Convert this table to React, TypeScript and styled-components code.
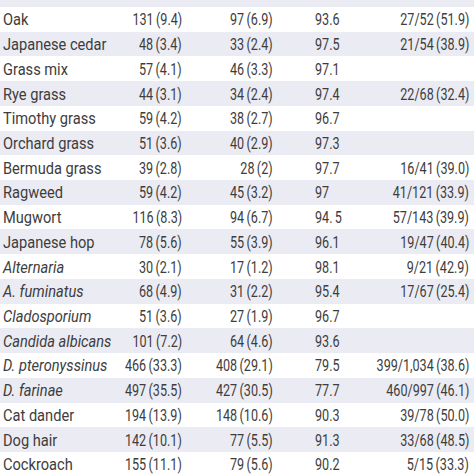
import React from "react";
import styled, { createGlobalStyle } from "styled-components";

const Global = createGlobalStyle`
  html, body { margin: 0; padding: 0; background: #ffffff; }
  body { overflow: hidden; }
`;

const Table = styled.div`
  width: 474px;
  height: 474px;
  overflow: hidden;
  font-family: Roboto, "Liberation Sans", sans-serif;
  font-size: 17px;
  color: #3d3d3d;
`;

const HeadBand = styled.div`
  height: 7px;
  background: #ebebf3;
`;

const Row = styled.div<{ $shaded?: boolean }>`
  display: grid;
  grid-template-columns: 110px 72px 91px 80px 1fr;
  height: 24.72px;
  align-items: center;
  background: ${(p) => (p.$shaded ? "#ebebf3" : "#ffffff")};
`;

const Cell = styled.div<{ $align?: "left" | "right"; $pl?: number; $pr?: number }>`
  display: flex;
  justify-content: ${(p) => (p.$align === "right" ? "flex-end" : "flex-start")};
  padding-left: ${(p) => p.$pl || 0}px;
  padding-right: ${(p) => p.$pr || 0}px;
  white-space: nowrap;
  line-height: 24px;
  min-width: 0;
`;

const Text = styled.span<{ $origin?: "left" | "right"; $italic?: boolean; $num?: boolean }>`
  display: inline-block;
  flex: none;
  transform: scaleX(${(p) => (p.$num ? 0.74 : 0.86)});
  transform-origin: ${(p) => p.$origin || "left"} center;
  font-style: ${(p) => (p.$italic ? "italic" : "normal")};
  word-spacing: ${(p) => (p.$num ? "-1px" : "0")};
`;

type R = [string, string, string, string, string, boolean?];

const rows: R[] = [
  ["Oak", "131 (9.4)", "97 (6.9)", "93.6", "27/52 (51.9)"],
  ["Japanese cedar", "48 (3.4)", "33 (2.4)", "97.5", "21/54 (38.9)"],
  ["Grass mix", "57 (4.1)", "46 (3.3)", "97.1", ""],
  ["Rye grass", "44 (3.1)", "34 (2.4)", "97.4", "22/68 (32.4)"],
  ["Timothy grass", "59 (4.2)", "38 (2.7)", "96.7", ""],
  ["Orchard grass", "51 (3.6)", "40 (2.9)", "97.3", ""],
  ["Bermuda grass", "39 (2.8)", "28 (2)", "97.7", "16/41 (39.0)"],
  ["Ragweed", "59 (4.2)", "45 (3.2)", "97", "41/121 (33.9)"],
  ["Mugwort", "116 (8.3)", "94 (6.7)", "94. 5", "57/143 (39.9)"],
  ["Japanese hop", "78 (5.6)", "55 (3.9)", "96.1", "19/47 (40.4)"],
  ["Alternaria", "30 (2.1)", "17 (1.2)", "98.1", "9/21 (42.9)", true],
  ["A. fuminatus", "68 (4.9)", "31 (2.2)", "95.4", "17/67 (25.4)", true],
  ["Cladosporium", "51 (3.6)", "27 (1.9)", "96.7", "", true],
  ["Candida albicans", "101 (7.2)", "64 (4.6)", "93.6", "", true],
  ["D. pteronyssinus", "466 (33.3)", "408 (29.1)", "79.5", "399/1,034 (38.6)", true],
  ["D. farinae", "497 (35.5)", "427 (30.5)", "77.7", "460/997 (46.1)", true],
  ["Cat dander", "194 (13.9)", "148 (10.6)", "90.3", "39/78 (50.0)"],
  ["Dog hair", "142 (10.1)", "77 (5.5)", "91.3", "33/68 (48.5)"],
  ["Cockroach", "155 (11.1)", "79 (5.6)", "90.2", "5/15 (33.3)"],
];

export default function App() {
  return (
    <>
      <Global />
      <Table>
        <HeadBand />
        {rows.map((r, i) => (
          <Row key={r[0]} $shaded={i % 2 === 1}>
            <Cell $pl={3}>
              <Text $italic={r[5]}>{r[0]}</Text>
            </Cell>
            <Cell $align="right">
              <Text $num $origin="right">{r[1]}</Text>
            </Cell>
            <Cell $align="right">
              <Text $num $origin="right">{r[2]}</Text>
            </Cell>
            <Cell $pl={42}>
              <Text $num>{r[3]}</Text>
            </Cell>
            <Cell $align="right" $pr={5}>
              {r[4] && <Text $num $origin="right">{r[4]}</Text>}
            </Cell>
          </Row>
        ))}
      </Table>
    </>
  );
}
